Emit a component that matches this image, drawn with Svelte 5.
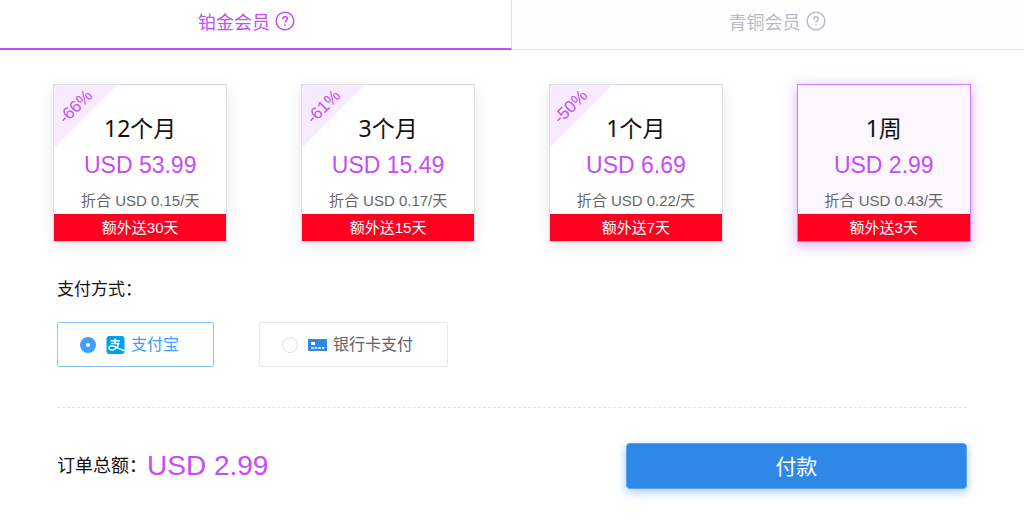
<script>
  const tabs = [
    { id: 'platinum', label: '铂金会员' },
    { id: 'bronze', label: '青铜会员' }
  ];

  const plans = [
    { name: '12个月', price: '53.99', perDay: '0.15', bonus: 30, off: 66 },
    { name: '3个月', price: '15.49', perDay: '0.17', bonus: 15, off: 61 },
    { name: '1个月', price: '6.69', perDay: '0.22', bonus: 7, off: 50 },
    { name: '1周', price: '2.99', perDay: '0.43', bonus: 3, off: 0 }
  ];

  let activeTab = $state('platinum');
  let selected = $state(3);
  let payment = $state('alipay');

  let total = $derived(plans[selected].price);
</script>

<main lang="zh-CN">
  <nav class="tabs">
    {#each tabs as tab}
      <button class="tab" class:active={activeTab === tab.id} onclick={() => (activeTab = tab.id)}>
        <span>{tab.label}</span>
        <svg class="help" viewBox="0 0 20 20" aria-hidden="true">
          <circle cx="10" cy="10" r="8.8" />
          <path d="M7.7 8.2c0-1.5 1-2.4 2.3-2.4s2.3.9 2.3 2.1c0 1.7-2.3 1.9-2.3 3.7" />
          <path d="M10 13.2v1.5" />
        </svg>
      </button>
    {/each}
  </nav>

  <section class="plans">
    {#each plans as plan, i}
      <button class="plan" class:selected={selected === i} onclick={() => (selected = i)}>
        {#if plan.off}
          <span class="corner"><span class="off">-{plan.off}%</span></span>
        {/if}
        <span class="name">{plan.name}</span>
        <span class="price">USD {plan.price}</span>
        <span class="per-day">折合 USD {plan.perDay}/天</span>
        <span class="bonus">额外送{plan.bonus}天</span>
      </button>
    {/each}
  </section>

  <section class="payment">
    <h2>支付方式：</h2>
    <div class="methods">
      <label class="method" class:checked={payment === 'alipay'}>
        <input type="radio" name="payment" value="alipay" bind:group={payment} />
        <svg class="icon" viewBox="0 0 18 18" aria-hidden="true">
          <rect width="18" height="18" rx="3" fill="#00a0ea" />
          <g fill="none" stroke="#fff" stroke-width="1.5">
            <path d="M4 4.800h9.500M8.800 2.600v4.800M4.600 7.400h7.600c-.8 3-3.400 6.200-6.200 6.500-2.400.2-3.700-.7-3.600-2.100.1-1.600 2-2.200 4-1.700 3.200.8 6.500 3 11.600 4.700" />
          </g>
        </svg>
        <span>支付宝</span>
      </label>
      <label class="method" class:checked={payment === 'card'}>
        <input type="radio" name="payment" value="card" bind:group={payment} />
        <svg class="icon" viewBox="0 0 19 18" aria-hidden="true">
          <rect y="3" width="19" height="12" rx="0.5" fill="#2d88e8" />
          <rect x="3" y="6" width="4" height="3" fill="#fff" />
          <path d="M3 12h13.500" stroke="#fff" stroke-width="1.6" stroke-dasharray="2.700 0.900" />
        </svg>
        <span>银行卡支付</span>
      </label>
    </div>
  </section>

  <footer class="order">
    <p>订单总额：<strong>USD {total}</strong></p>
    <button class="pay">付款</button>
  </footer>
</main>

<style>
  :global(body) {
    margin: 0;
    background: #fff;
  }

  main {
    font-family: 'Liberation Sans', 'Noto Sans CJK SC', sans-serif;
    color: #111;
  }

  button {
    font-family: inherit;
    cursor: pointer;
  }

  .tabs {
    display: grid;
    grid-template-columns: 1fr 1fr;
  }

  .tab {
    display: flex;
    align-items: center;
    justify-content: center;
    gap: 5px;
    box-sizing: border-box;
    height: 50px;
    padding: 0 0 8px 18px;
    border: 0;
    border-bottom: 1px solid #dcdfe6;
    background: #fefefe;
    color: #b4bcc8;
    font-size: 18px;
  }

  .tab:first-child {
    padding: 0 18px 6px 0;
    border-right: 1px solid #dcdfe6;
  }

  .tab.active {
    border-bottom: 2px solid #c44df5;
    background: #fff;
    color: #c44df5;
  }

  .help {
    width: 20px;
    height: 20px;
    fill: none;
    stroke: currentColor;
    stroke-width: 1.5;
  }

  .plans {
    display: flex;
    justify-content: space-between;
    padding: 34px 53px 0;
  }

  .plan {
    position: relative;
    display: flex;
    flex-direction: column;
    box-sizing: border-box;
    width: 19%;
    padding: 27px 0 0;
    border: 1px solid #dcdce2;
    background: #fff;
    box-shadow: 0 3px 12px rgba(0, 0, 0, 0.1);
    text-align: center;
  }

  .plan.selected {
    border-color: #d27af8;
    background: #fcf6ff;
    box-shadow: 0 3px 12px rgba(196, 77, 245, 0.5);
  }

  .corner {
    position: absolute;
    top: 0;
    left: 0;
    display: flex;
    align-items: center;
    justify-content: center;
    box-sizing: border-box;
    width: 63px;
    height: 63px;
    padding: 0 20px 20px 0;
    background: #f8eaff;
    clip-path: polygon(0 0, 100% 0, 0 100%);
  }

  .off {
    color: #c44df5;
    font-size: 17px;
    transform: rotate(-45deg);
  }

  .name {
    color: #111;
    font-family: 'Noto Sans', 'Noto Sans CJK SC', sans-serif;
    font-size: 23px;
    line-height: 32px;
  }

  .price {
    color: #c44df5;
    font-size: 23px;
    line-height: 43px;
  }

  .per-day {
    color: #666;
    font-size: 15px;
    line-height: 27px;
  }

  .bonus {
    background: #ff0020;
    color: #fff;
    font-size: 15px;
    line-height: 27px;
  }

  .payment {
    margin: 35px 57px 0;
    padding-bottom: 40px;
    border-bottom: 1px dashed #e2e2e2;
  }

  h2 {
    margin: 0 0 19px;
    font-size: 17px;
    font-weight: 400;
    line-height: 26px;
  }

  .methods {
    display: flex;
    gap: 45px;
  }

  .method {
    display: flex;
    align-items: center;
    box-sizing: border-box;
    height: 45px;
    padding: 0 34px 0 22px;
    border: 1px solid #e8e8e8;
    border-radius: 2px;
    color: #606266;
    font-size: 16px;
    line-height: 26px;
    cursor: pointer;
  }

  .method.checked {
    border-color: #8cc5ff;
    color: #409eff;
  }

  .method input {
    appearance: none;
    box-sizing: border-box;
    width: 16px;
    height: 16px;
    margin: 0 10px 0 0;
    border: 1px solid #dcdfe6;
    border-radius: 50%;
    background: #fff;
  }

  .method input:checked {
    border: 6px solid #409eff;
  }

  .icon {
    width: 19px;
    height: 18px;
    margin-right: 6px;
  }

  .order {
    display: flex;
    align-items: center;
    justify-content: space-between;
    padding: 35px 57px 32px;
  }

  .order p {
    display: flex;
    align-items: center;
    margin: 0;
    font-size: 18px;
    line-height: 44px;
  }

  .order strong {
    color: #c44df5;
    font-size: 28px;
    font-weight: 400;
  }

  .pay {
    width: 37.5%;
    height: 46px;
    padding: 0 0 2px;
    border: 1px solid #5ba4f0;
    border-radius: 4px;
    background: #2d88e8;
    box-shadow: 0 3px 10px rgba(45, 136, 232, 0.45);
    color: #fff;
    font-size: 21px;
  }
</style>
